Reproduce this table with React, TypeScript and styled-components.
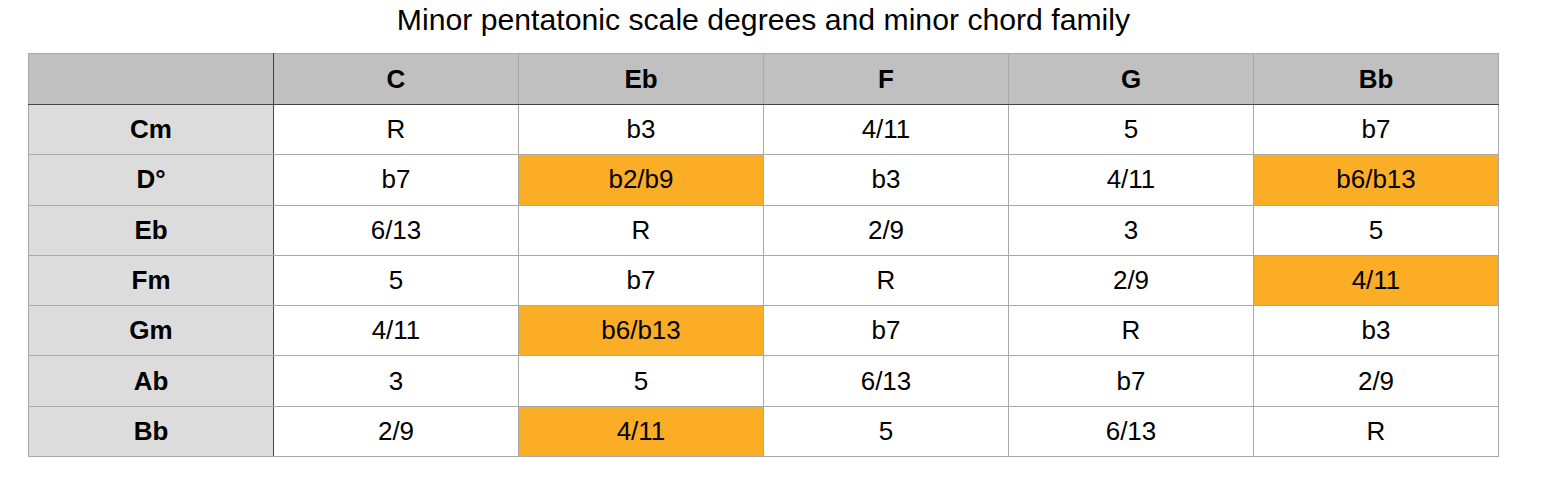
import React from 'react';
import styled, { createGlobalStyle } from 'styled-components';

const COLUMNS = ['C', 'Eb', 'F', 'G', 'Bb'];

const ROWS: { chord: string; cells: string[]; hot: number[] }[] = [
  { chord: 'Cm', cells: ['R', 'b3', '4/11', '5', 'b7'], hot: [] },
  { chord: 'D°', cells: ['b7', 'b2/b9', 'b3', '4/11', 'b6/b13'], hot: [1, 4] },
  { chord: 'Eb', cells: ['6/13', 'R', '2/9', '3', '5'], hot: [] },
  { chord: 'Fm', cells: ['5', 'b7', 'R', '2/9', '4/11'], hot: [4] },
  { chord: 'Gm', cells: ['4/11', 'b6/b13', 'b7', 'R', 'b3'], hot: [1] },
  { chord: 'Ab', cells: ['3', '5', '6/13', 'b7', '2/9'], hot: [] },
  { chord: 'Bb', cells: ['2/9', '4/11', '5', '6/13', 'R'], hot: [1] },
];

export default function App() {
  return (
    <>
      <GlobalStyle />
      <Page>
        <Title>Minor pentatonic scale degrees and minor chord family</Title>
        <Table>
          <thead>
            <tr>
              <Corner />
              {COLUMNS.map((c) => (
                <HeadCell key={c}>{c}</HeadCell>
              ))}
            </tr>
          </thead>
          <tbody>
            {ROWS.map((row) => (
              <tr key={row.chord}>
                <RowHead>{row.chord}</RowHead>
                {row.cells.map((v, i) => (
                  <Cell key={i} $hot={row.hot.includes(i)}>
                    {v}
                  </Cell>
                ))}
              </tr>
            ))}
          </tbody>
        </Table>
      </Page>
    </>
  );
}

const GlobalStyle = createGlobalStyle`
  html, body {
    margin: 0;
    background: #ffffff;
    font-family: "Liberation Sans", Arial, Helvetica, sans-serif;
    color: #000;
  }
`;

const Page = styled.div`
  width: 1471px;
  padding: 3px 0 0 28px;
`;

const Title = styled.h1`
  margin: 0;
  height: 50px;
  font-size: 30.2px;
  font-weight: 400;
  line-height: 34px;
  text-align: center;
`;

const Table = styled.table`
  width: 1471px;
  border-collapse: collapse;
  table-layout: fixed;
  border: 1px solid #a8a8a8;

  td, th {
    height: 49.3px;
    padding: 0;
    text-align: center;
    vertical-align: middle;
    border: 1px solid #a8a8a8;
    font-size: 26px;
  }
`;

const HeadCell = styled.th`
  height: 50px !important;
  background: #bfc0bf;
  font-weight: 700;
  border-bottom: 1px solid #454545 !important;
`;

const Corner = styled(HeadCell)`
  border-right: 1px solid #454545 !important;
`;

const RowHead = styled.th`
  background: #dcdcdc;
  font-weight: 700;
  border-right: 1px solid #454545 !important;
`;

const Cell = styled.td<{ $hot: boolean }>`
  background: ${(p) => (p.$hot ? '#fcad26' : '#ffffff')};
  font-weight: 400;
`;
